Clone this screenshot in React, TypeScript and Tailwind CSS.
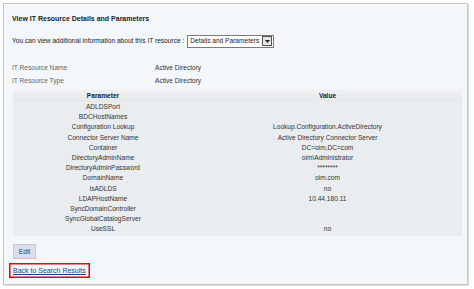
import React from 'react';

const rows: [string, string][] = [
  ['ADLDSPort', ''],
  ['BDCHostNames', ''],
  ['Configuration Lookup', 'Lookup.Configuration.ActiveDirectory'],
  ['Connector Server Name', 'Active Directory Connector Server'],
  ['Container', 'DC=oim,DC=com'],
  ['DirectoryAdminName', 'oim\\Administrator'],
  ['DirectoryAdminPassword', '********'],
  ['DomainName', 'oim.com'],
  ['IsADLDS', 'no'],
  ['LDAPHostName', '10.44.180.11'],
  ['SyncDomainController', ''],
  ['SyncGlobalCatalogServer', ''],
  ['UseSSL', 'no'],
];

const App: React.FC = () => {
  return (
    <div
      className="w-[474px] h-[289px] bg-white pt-[3px] pl-[3px] text-[6.6px] leading-[10px] text-[#333]"
      style={{ fontFamily: '"Liberation Sans", Arial, sans-serif' }}
    >
      <div className="w-[465px] h-[282px] border border-[#c4c4c4] bg-[#f3f7fa] shadow-[1px_1px_0_#e0e0e0] px-[8px] pt-[10px]">
        <h1 className="font-bold text-[7px] text-[#222] leading-[10px]">
          View IT Resource Details and Parameters
        </h1>
        <div className="flex items-center mt-[10px] h-[14px]">
          <span className="text-[#222]">You can view additional information about this IT resource :</span>
          <div className="ml-[3px] flex items-center h-[13px] border border-[#7a7a7a] bg-white">
            <span className="px-[2px] text-[#222]">Details and Parameters</span>
            <div className="mx-[1px] w-[10px] h-[10px] border border-[#555] bg-[#e4e4e4] flex items-center justify-center">
              <svg width="5" height="3" viewBox="0 0 5 3">
                <path d="M0 0h5L2.5 3z" fill="#222" />
              </svg>
            </div>
          </div>
        </div>
        <div className="mt-[13px] text-[#666]">
          <div className="flex h-[13px] items-center">
            <span className="w-[143px]">IT Resource Name</span>
            <span className="text-[#333]">Active Directory</span>
          </div>
          <div className="flex h-[13px] items-center">
            <span className="w-[143px]">IT Resource Type</span>
            <span className="text-[#333]">Active Directory</span>
          </div>
        </div>
        <div className="mt-[3px] w-[449px] ml-[1px] bg-[#e9edef] pb-[2px]">
          <div className="flex h-[12px] items-center font-bold text-[#222] bg-gradient-to-b from-[#eef0f1] to-[#e6e9ea]">
            <div className="w-[180px] text-center">Parameter</div>
            <div className="flex-1 text-center">Value</div>
          </div>
          {rows.map(([p, v]) => (
            <div key={p} className="flex h-[10.2px] items-center text-[#333]">
              <div className="w-[180px] text-center">{p}</div>
              <div className="flex-1 text-center">{v}</div>
            </div>
          ))}
        </div>
        <div className="mt-[8px] ml-[1px]">
          <button className="block w-[23px] h-[15px] bg-[#d8deec] border border-[#c2c8d6] text-[#1e3f7a] text-[6.6px]">
            Edit
          </button>
        </div>
        <div className="mt-[4px] -ml-[3px] flex">
          <div className="ring-[1.5px] ring-inset ring-red-600 px-[4px] h-[15px] flex items-center">
            <a href="#" className="text-[#1d3f8c] underline text-[7px] leading-[10px]">
              Back to Search Results
            </a>
          </div>
        </div>
      </div>
    </div>
  );
};

export default App;
